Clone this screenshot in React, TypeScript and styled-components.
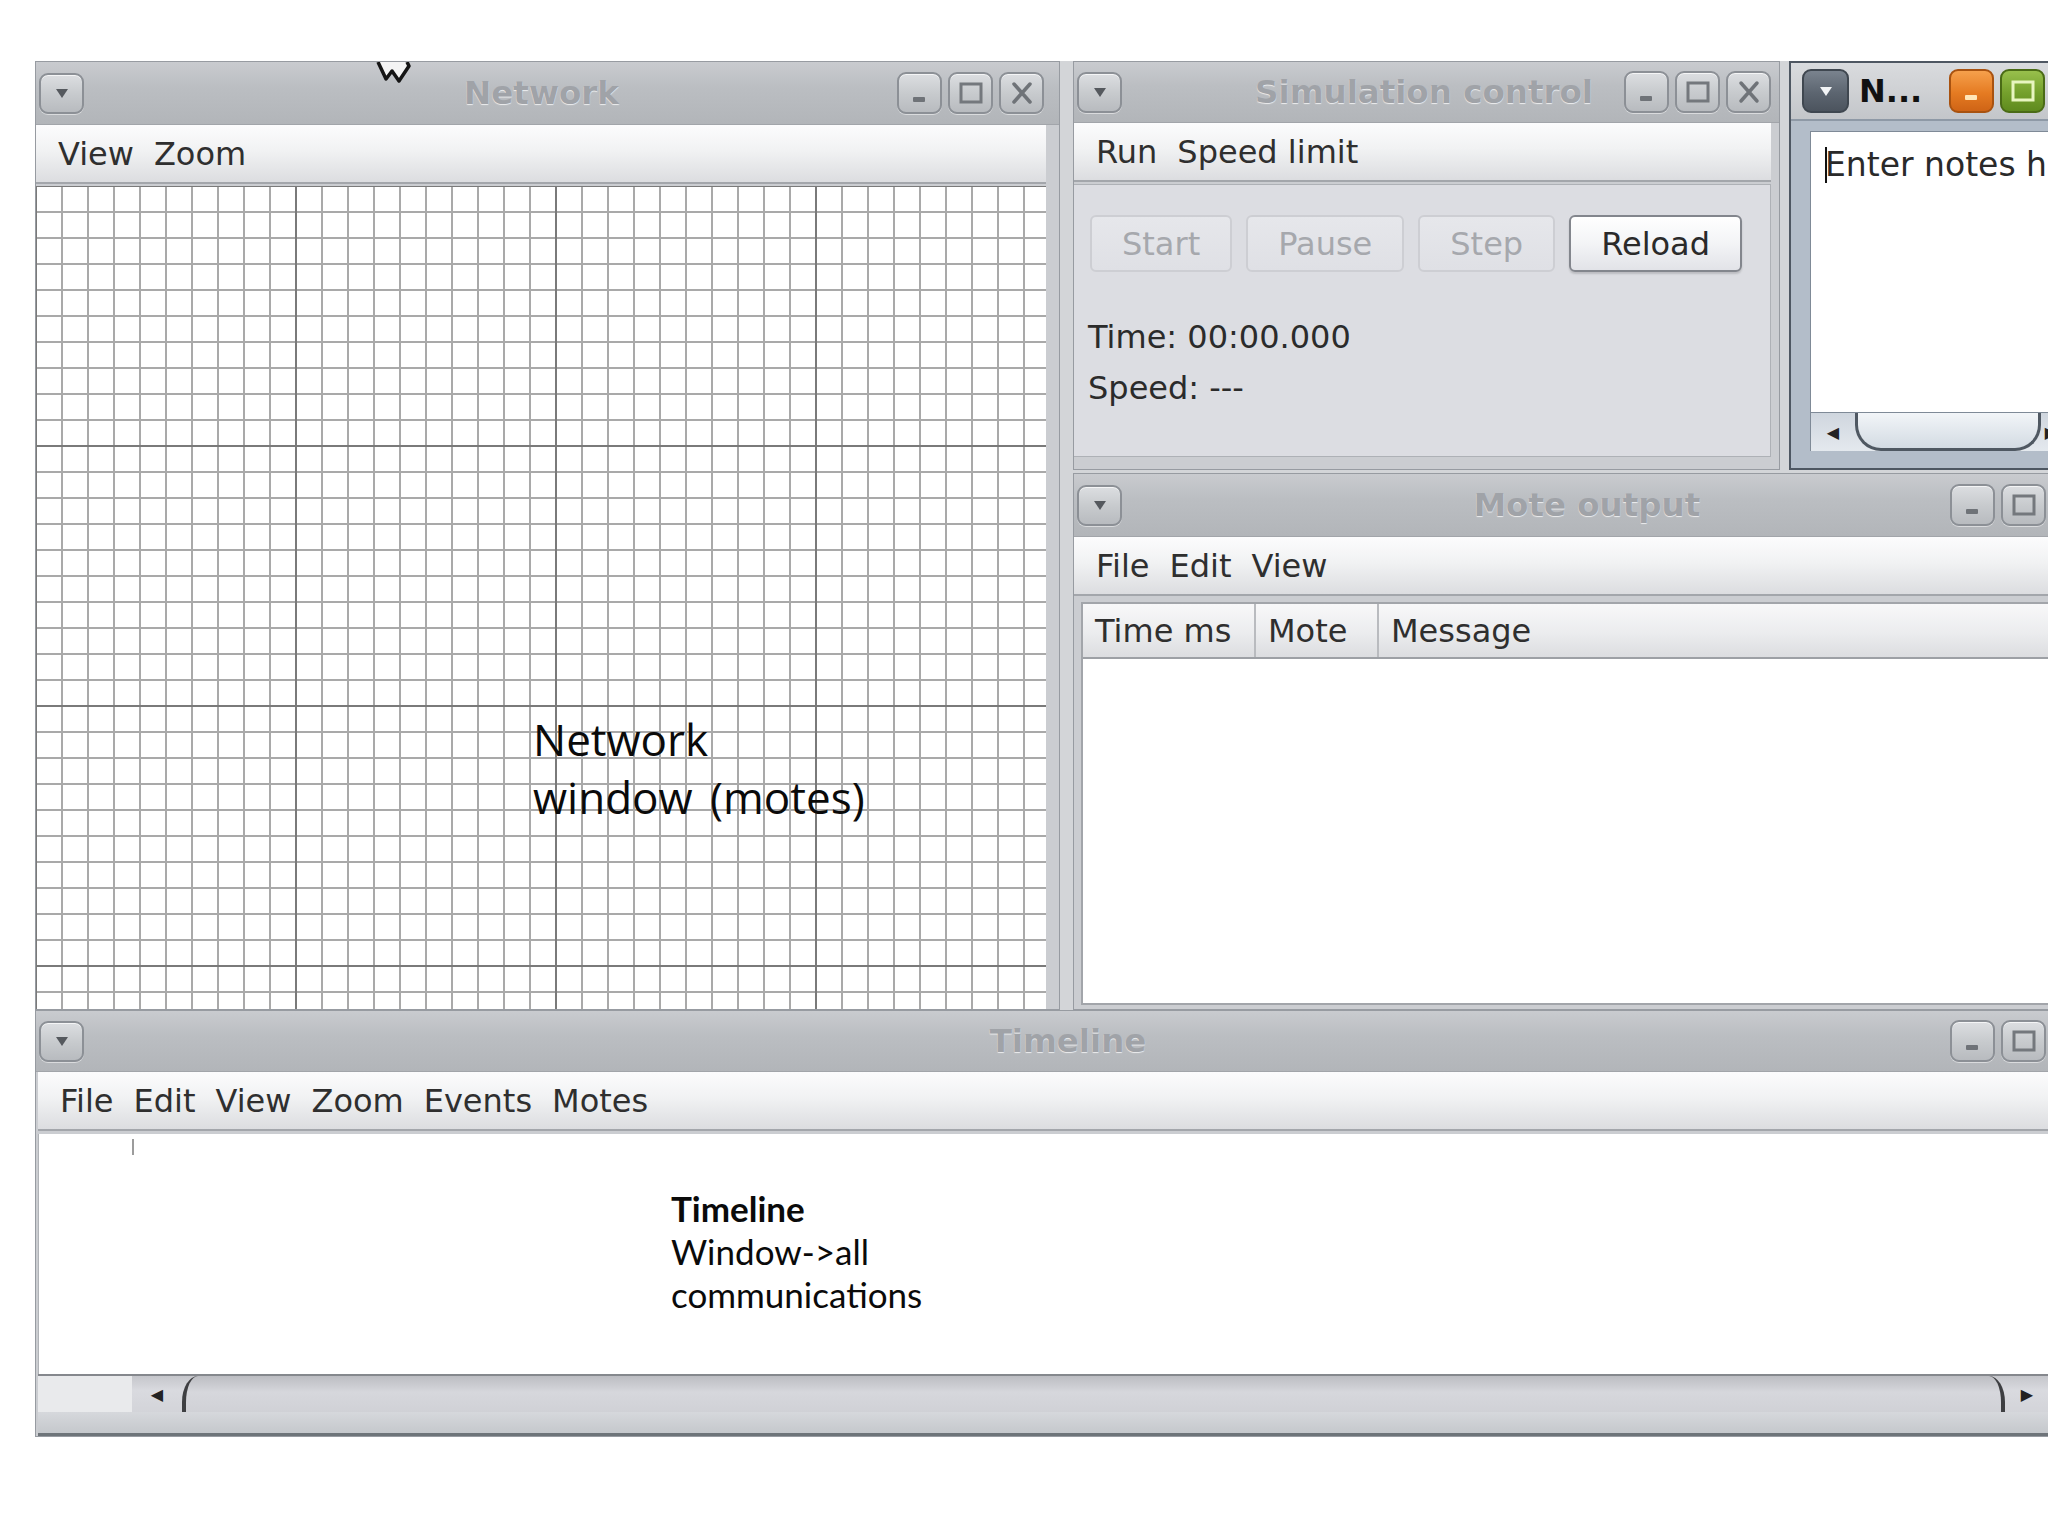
import React from 'react';
import styled, { createGlobalStyle, css } from 'styled-components';

const GlobalStyle = createGlobalStyle`
  html, body { margin: 0; padding: 0; background: #ffffff; overflow: hidden; }
  body { font-family: "DejaVu Sans", "Liberation Sans", sans-serif; }
`;

const Page = styled.div`
  width: 2048px;
  height: 1536px;
  overflow: hidden;
  background: #ffffff;
  padding: 61px 0 0 35px;
  box-sizing: border-box;
`;

const Desktop = styled.div`
  width: 2071px;
  display: flex;
  flex-direction: column;
  background: #cfd1d5;
`;

const TopRow = styled.div`
  height: 949px;
  display: flex;
  gap: 13px;
  background: #d3d5d8;
`;

const RightCol = styled.div`
  flex: 1;
  min-width: 0;
  display: flex;
  flex-direction: column;
  gap: 3px;
`;

const TopRight = styled.div`
  height: 409px;
  display: flex;
  gap: 9px;
`;

const Win = styled.div<{ $w?: number; $h?: number; $dark?: boolean }>`
  ${(p) => (p.$w ? `width: ${p.$w}px; flex: none;` : 'flex: 1; min-width: 0;')}
  ${(p) => (p.$h ? `height: ${p.$h}px; flex: none;` : '')}
  display: flex;
  flex-direction: column;
  box-sizing: border-box;
  border: ${(p) => (p.$dark ? '2px solid #4e5762' : '1px solid #979ba1')};
  background: ${(p) => (p.$dark ? '#b3bdc9' : '#cbcdd1')};
  overflow: hidden;
`;

const TitleBar = styled.div<{ $h: number; $padR: number; $padL?: number }>`
  position: relative;
  height: ${(p) => p.$h}px;
  flex: none;
  display: grid;
  grid-template-columns: 1fr auto 1fr;
  align-items: center;
  padding: 0 ${(p) => p.$padR}px 0 ${(p) => p.$padL ?? 3}px;
  background: linear-gradient(#c9cbcf 0%, #bbbec2 40%, #b2b5b9 100%);
  border-bottom: 1px solid #a2a5aa;
  overflow: hidden;
`;

const NotesTitleBar = styled.div`
  height: 56px;
  flex: none;
  display: flex;
  align-items: center;
  gap: 10px;
  padding: 0 8px 0 11px;
  background: linear-gradient(#d9dbde 0%, #cfd1d4 50%, #c3c6ca 100%);
  border-bottom: 2px solid #8e99a6;
`;

const Title = styled.div`
  font-family: "DejaVu Sans", sans-serif;
  font-weight: bold;
  font-size: 32.5px;
  color: #a0a3a8;
  text-shadow: 0 1px 1px rgba(255, 255, 255, 0.75);
  white-space: nowrap;
`;

const NotesTitle = styled.div`
  flex: 1;
  font-weight: bold;
  font-size: 32px;
  color: #111;
  white-space: nowrap;
`;

const LeftCell = styled.div`
  justify-self: start;
  display: flex;
`;

const BtnGroup = styled.div`
  justify-self: end;
  display: flex;
  gap: 6px;
`;

type Tone = 'gray' | 'dark' | 'orange' | 'green';

const toneStyles: Record<Tone, ReturnType<typeof css>> = {
  gray: css`
    border: 2px solid #8c9096;
    background: linear-gradient(#dcdee1 0%, #c8cbce 50%, #b8bbbf 100%);
    box-shadow: inset 0 1px 0 rgba(255, 255, 255, 0.7), 0 1px 0 rgba(255, 255, 255, 0.5);
  `,
  dark: css`
    border: 2px solid #3f4750;
    background: linear-gradient(#7a838e 0%, #5c6570 55%, #4c545e 100%);
  `,
  orange: css`
    border: 2px solid #a85210;
    background: linear-gradient(#f6a04c 0%, #e57b22 55%, #cf6416 100%);
  `,
  green: css`
    border: 2px solid #4a6b16;
    background: linear-gradient(#98c04c 0%, #74a02c 55%, #5f8a1e 100%);
  `,
};

const TBtn = styled.div<{ $w: number; $h: number; $tone: Tone }>`
  width: ${(p) => p.$w}px;
  height: ${(p) => p.$h}px;
  box-sizing: border-box;
  border-radius: 9px;
  display: flex;
  align-items: center;
  justify-content: center;
  flex: none;
  ${(p) => toneStyles[p.$tone]}
  svg { display: block; }
`;

const DropIcon = ({ color = '#55595e' }: { color?: string }) => (
  <svg width="20" height="14" viewBox="0 0 20 14">
    <path d="M4 3 L16 3 L10 12 Z" fill={color} />
  </svg>
);

const MinIcon = ({ color = '#6f7378' }: { color?: string }) => (
  <svg width="30" height="30" viewBox="0 0 30 30">
    <rect x="8" y="19" width="12" height="5" rx="1" fill={color} />
  </svg>
);

const MaxIcon = ({ color = '#74787d' }: { color?: string }) => (
  <svg width="30" height="30" viewBox="0 0 30 30">
    <rect x="5" y="6" width="20" height="18" fill="none" stroke={color} strokeWidth="3" />
  </svg>
);

const CloseIcon = () => (
  <svg width="30" height="30" viewBox="0 0 30 30">
    <path d="M7 6 L23 24 M23 6 L7 24" stroke="#6f7378" strokeWidth="3.5" strokeLinecap="round" />
  </svg>
);

const CursorSvg = styled.svg`
  position: absolute;
  left: 339px;
  top: 0;
`;

const Cursor = () => (
  <CursorSvg width="40" height="24" viewBox="0 0 40 24">
    <path d="M3 0 L11 17 L17 9 L24 19 L34 4 L32 0 Z" fill="#f4f4f4" />
    <path
      d="M3 0 L11 17 L17 9 L24 19 L34 4 L32 0"
      fill="none"
      stroke="#151515"
      strokeWidth="3.5"
      strokeLinejoin="round"
    />
  </CursorSvg>
);

const Frame = styled.div<{ $pad: string }>`
  flex: 1;
  min-height: 0;
  display: flex;
  flex-direction: column;
  padding: ${(p) => p.$pad};
`;

const MenuBar = styled.div`
  height: 57px;
  flex: none;
  display: flex;
  align-items: center;
  padding-left: 12px;
  background: linear-gradient(#fcfcfd 0%, #f1f2f3 45%, #dcdde0 100%);
  border-bottom: 2px solid #a3a6ab;
  font-size: 32px;
  color: #2f2f2f;
  white-space: nowrap;
`;

const MenuItem = styled.span`
  padding: 0 10px;
`;

const Grid = styled.div`
  position: relative;
  flex: 1;
  margin-top: 2px;
  background-color: #ffffff;
  background-image:
    linear-gradient(to right, #7a7a7a 2px, transparent 2px),
    linear-gradient(to bottom, #7a7a7a 2px, transparent 2px),
    linear-gradient(to right, #a9a9a9 2px, transparent 2px),
    linear-gradient(to bottom, #a9a9a9 2px, transparent 2px);
  background-size: 260px 100%, 100% 260px, 26px 100%, 100% 26px;
  background-position: -1px 0, 0 -1px, -1px 0, 0 -1px;
`;

const Caption = styled.div`
  position: absolute;
  left: 497px;
  top: 524px;
  font-family: "Open Sans", Lato, sans-serif;
  font-size: 44px;
  line-height: 58px;
  word-spacing: 6px;
  color: #0a0a0a;
  white-space: nowrap;
`;

const SimPanel = styled.div`
  flex: 1;
  margin-top: 2px;
  background: #dcdde2;
  border: 1px solid #aeb1b6;
  border-left: none;
  padding: 30px 0 0 14px;
  display: flex;
  flex-direction: column;
`;

const ButtonRow = styled.div`
  display: flex;
  gap: 14px;
  margin-left: 2px;
`;

const SimButton = styled.div<{ $enabled?: boolean }>`
  height: 57px;
  box-sizing: border-box;
  padding: 0 30px;
  display: flex;
  align-items: center;
  border-radius: 6px;
  font-size: 32px;
  white-space: nowrap;
  ${(p) =>
    p.$enabled
      ? css`
          border: 2px solid #83868d;
          background: linear-gradient(#ffffff 0%, #f3f4f6 50%, #e2e3e8 100%);
          color: #2a2a2a;
          box-shadow: 0 2px 2px rgba(0, 0, 0, 0.15);
        `
      : css`
          border: 2px solid #cdced3;
          background: linear-gradient(#e6e7eb, #dfe0e5);
          color: #a6a8ad;
        `}
`;

const Info = styled.div`
  margin-top: 40px;
  font-size: 32px;
  line-height: 51px;
  color: #2b2b2b;
`;

const NotesBody = styled.div`
  flex: 1;
  display: flex;
  flex-direction: column;
  padding: 10px 0 17px 19px;
`;

const NotesText = styled.div`
  flex: 1;
  background: #ffffff;
  border: 1px solid #7f8a97;
  border-right: none;
  padding: 14px 0 0 14px;
  font-size: 33px;
  line-height: 38px;
  color: #2a2a2a;
  white-space: nowrap;
  overflow: hidden;
`;

const Caret = styled.span`
  display: inline-block;
  width: 2px;
  height: 36px;
  margin-right: -2px;
  vertical-align: -7px;
  background: #111;
`;

const NotesScroll = styled.div`
  height: 38px;
  flex: none;
  display: flex;
  background: linear-gradient(#cfd6de, #e4e9ee);
  border-left: 1px solid #7f8a97;
`;

const SmallArrow = styled.div<{ $w: number }>`
  width: ${(p) => p.$w}px;
  flex: none;
  display: flex;
  align-items: center;
  justify-content: center;
  font-size: 16px;
  color: #222;
`;

const NotesThumb = styled.div`
  width: 186px;
  flex: none;
  box-sizing: border-box;
  border: 3px solid #4f5862;
  border-top: none;
  border-radius: 0 0 26px 26px;
  background: linear-gradient(#f2f5f8, #d3dbe3);
`;

const NotesBtnGroup = styled.div`
  display: flex;
  gap: 6px;
`;

const TableBox = styled.div`
  flex: 1;
  display: flex;
  flex-direction: column;
  margin: 6px 0 4px 7px;
  background: #ffffff;
  border: 2px solid #a2a5aa;
  border-right: none;
`;

const THead = styled.div`
  height: 53px;
  flex: none;
  display: flex;
  background: linear-gradient(#f8f8f9 0%, #ebecee 55%, #dcdde0 100%);
  border-bottom: 2px solid #9da0a5;
`;

const TH = styled.div<{ $w?: number }>`
  ${(p) => (p.$w ? `width: ${p.$w}px; flex: none;` : 'flex: 1;')}
  box-sizing: border-box;
  display: flex;
  align-items: center;
  padding-left: 12px;
  font-size: 32px;
  color: #2f2f2f;
  border-right: 2px solid #b9bbbf;
  white-space: nowrap;
`;

const TimelineCanvas = styled.div`
  height: 240px;
  flex: none;
  box-sizing: border-box;
  margin-top: 3px;
  padding: 5px 0 0 93px;
  background: #ffffff;
  border-left: 1px solid #b0b3b7;
`;

const Tick = styled.div`
  width: 2px;
  height: 16px;
  background: #9c9c9c;
`;

const Annotation = styled.div`
  margin: 32px 0 0 539px;
  font-family: Lato, "Open Sans", sans-serif;
  font-size: 35px;
  line-height: 43px;
  color: #0a0a0a;
`;

const AnnotationHead = styled.div`
  font-weight: bold;
`;

const HScroll = styled.div`
  height: 38px;
  flex: none;
  display: flex;
  box-sizing: border-box;
  border-top: 2px solid #85888d;
  background: linear-gradient(#c5c6cb 0%, #d9dadf 40%, #d3d4d9 100%);
`;

const ScrollCorner = styled.div<{ $w: number }>`
  width: ${(p) => p.$w}px;
  flex: none;
  background: #e9eaec;
`;

const ScrollThumb = styled.div`
  flex: 1;
  box-sizing: border-box;
  border-left: 4px solid #3e3f42;
  border-right: 4px solid #3e3f42;
  border-radius: 16px 16px 0 0 / 26px 26px 0 0;
  background: linear-gradient(#bcbdc2 0%, #d6d7dc 45%, #d0d1d6 100%);
`;

const TimelineFoot = styled.div`
  height: 21px;
  flex: none;
  background: linear-gradient(#d6d8dc, #c5c8cc);
  border-bottom: 3px solid #6e7479;
`;

const GrayButtons = ({ close = true }: { close?: boolean }) => (
  <BtnGroup>
    <TBtn $w={45} $h={42} $tone="gray"><MinIcon /></TBtn>
    <TBtn $w={45} $h={42} $tone="gray"><MaxIcon /></TBtn>
    {close && <TBtn $w={45} $h={42} $tone="gray"><CloseIcon /></TBtn>}
  </BtnGroup>
);

const Drop = () => (
  <LeftCell>
    <TBtn $w={45} $h={41} $tone="gray"><DropIcon /></TBtn>
  </LeftCell>
);

export default function App() {
  return (
    <>
      <GlobalStyle />
      <Page>
        <Desktop>
          <TopRow>
            <Win $w={1025}>
              <TitleBar $h={62} $padR={15}>
                <Drop />
                <Title>Network</Title>
                <GrayButtons />
                <Cursor />
              </TitleBar>
              <Frame $pad="0 13px 0 0">
                <MenuBar>
                  <MenuItem>View</MenuItem>
                  <MenuItem>Zoom</MenuItem>
                </MenuBar>
                <Grid>
                  <Caption>
                    Network
                    <br />
                    window (motes)
                  </Caption>
                </Grid>
              </Frame>
            </Win>

            <RightCol>
              <TopRight>
                <Win $w={707}>
                  <TitleBar $h={60} $padR={8}>
                    <Drop />
                    <Title>Simulation control</Title>
                    <GrayButtons />
                  </TitleBar>
                  <Frame $pad="0 8px 12px 0">
                    <MenuBar>
                      <MenuItem>Run</MenuItem>
                      <MenuItem>Speed limit</MenuItem>
                    </MenuBar>
                    <SimPanel>
                      <ButtonRow>
                        <SimButton>Start</SimButton>
                        <SimButton>Pause</SimButton>
                        <SimButton>Step</SimButton>
                        <SimButton $enabled>Reload</SimButton>
                      </ButtonRow>
                      <Info>
                        <div>Time: 00:00.000</div>
                        <div>Speed: ---</div>
                      </Info>
                    </SimPanel>
                  </Frame>
                </Win>

                <Win $dark>
                  <NotesTitleBar>
                    <TBtn $w={47} $h={44} $tone="dark"><DropIcon color="#f2f4f6" /></TBtn>
                    <NotesTitle>N...</NotesTitle>
                    <NotesBtnGroup>
                      <TBtn $w={45} $h={44} $tone="orange"><MinIcon color="#ffe6b8" /></TBtn>
                      <TBtn $w={45} $h={44} $tone="green"><MaxIcon color="#e8f5c0" /></TBtn>
                      <TBtn $w={45} $h={44} $tone="orange"><CloseIcon /></TBtn>
                    </NotesBtnGroup>
                  </NotesTitleBar>
                  <NotesBody>
                    <NotesText>
                      <Caret />
                      Enter notes here
                    </NotesText>
                    <NotesScroll>
                      <SmallArrow $w={44}>◀</SmallArrow>
                      <NotesThumb />
                      <SmallArrow $w={20}>▶</SmallArrow>
                    </NotesScroll>
                  </NotesBody>
                </Win>
              </TopRight>

              <Win>
                <TitleBar $h={62} $padR={8}>
                  <Drop />
                  <Title>Mote output</Title>
                  <GrayButtons />
                </TitleBar>
                <Frame $pad="0">
                  <MenuBar>
                    <MenuItem>File</MenuItem>
                    <MenuItem>Edit</MenuItem>
                    <MenuItem>View</MenuItem>
                  </MenuBar>
                  <TableBox>
                    <THead>
                      <TH $w={173}>Time ms</TH>
                      <TH $w={123}>Mote</TH>
                      <TH>Message</TH>
                    </THead>
                  </TableBox>
                </Frame>
              </Win>
            </RightCol>
          </TopRow>

          <Win $h={427}>
            <TitleBar $h={60} $padR={8}>
              <Drop />
              <Title>Timeline</Title>
              <GrayButtons />
            </TitleBar>
            <Frame $pad="0 0 0 2px">
              <MenuBar>
                <MenuItem>File</MenuItem>
                <MenuItem>Edit</MenuItem>
                <MenuItem>View</MenuItem>
                <MenuItem>Zoom</MenuItem>
                <MenuItem>Events</MenuItem>
                <MenuItem>Motes</MenuItem>
              </MenuBar>
              <TimelineCanvas>
                <Tick />
                <Annotation>
                  <AnnotationHead>Timeline</AnnotationHead>
                  <div>Window-&gt;all</div>
                  <div>communications</div>
                </Annotation>
              </TimelineCanvas>
              <HScroll>
                <ScrollCorner $w={94} />
                <SmallArrow $w={50}>◀</SmallArrow>
                <ScrollThumb />
                <SmallArrow $w={44}>▶</SmallArrow>
                <ScrollCorner $w={56} />
              </HScroll>
              <TimelineFoot />
            </Frame>
          </Win>
        </Desktop>
      </Page>
    </>
  );
}
